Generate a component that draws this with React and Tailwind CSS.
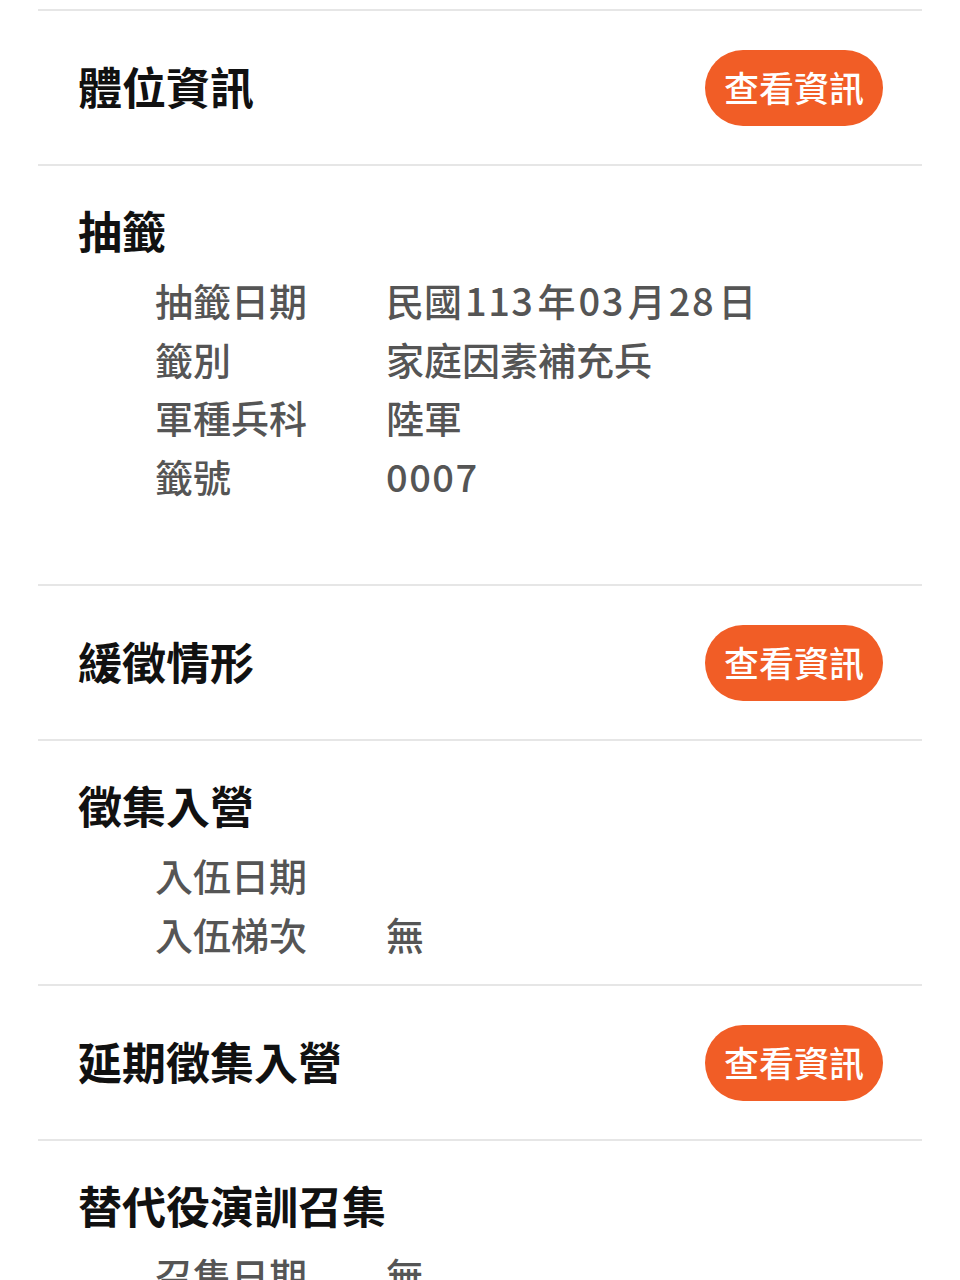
import React from "react";

const font = { fontFamily: '"Noto Sans CJK TC", "Noto Sans", sans-serif' };

function Value({ text }) {
  const parts = text.split(/(\d+)/).filter((p) => p !== "");
  return (
    <>
      {parts.map((p, i) =>
        /^\d+$/.test(p) ? (
          <span key={i} className={`tracking-[1.5px] ${i === 0 ? "" : "pl-[3px]"} ${i === parts.length - 1 ? "" : "pr-[3px]"}`}>
            {p}
          </span>
        ) : (
          <span key={i}>{p}</span>
        )
      )}
    </>
  );
}

function HeaderSection({ title }) {
  return (
    <div className="h-[155px] border-t-2 border-[#e6e6e6] flex items-center justify-between pl-[40px] pr-[39px]">
      <div className="text-[44px] leading-[60px] font-bold text-[#111111] mb-[4px]">{title}</div>
      <button className="w-[178px] h-[76px] rounded-full bg-[#f15d26] text-white text-[35px] leading-none font-medium flex items-center justify-center pb-[2px]">
        查看資訊
      </button>
    </div>
  );
}

function DataSection({ title, rows, height }) {
  return (
    <div className={`border-t-2 border-[#e6e6e6] pl-[40px] pt-[34px] ${height}`}>
      <div className="text-[44px] leading-[60px] font-bold text-[#111111]">{title}</div>
      <div className="mt-[10px] pl-[77px]">
        {rows.map(([k, v], i) => (
          <div key={i} className="flex h-[58.7px] items-center text-[38px] font-medium text-[#555555]">
            <div className="w-[231px] shrink-0">{k}</div>
            <div>
              <Value text={v} />
            </div>
          </div>
        ))}
      </div>
    </div>
  );
}

export default function App() {
  return (
    <div className="w-[960px] h-[1280px] overflow-hidden bg-white" style={font}>
      <div className="mx-[38px] pt-[9px]">
        <HeaderSection title="體位資訊" />
        <DataSection
          title="抽籤"
          height="h-[420px]"
          rows={[
            ["抽籤日期", "民國113年03月28日"],
            ["籤別", "家庭因素補充兵"],
            ["軍種兵科", "陸軍"],
            ["籤號", "0007"],
          ]}
        />
        <HeaderSection title="緩徵情形" />
        <DataSection
          title="徵集入營"
          height="h-[245px]"
          rows={[
            ["入伍日期", ""],
            ["入伍梯次", "無"],
          ]}
        />
        <HeaderSection title="延期徵集入營" />
        <DataSection
          title="替代役演訓召集"
          height="h-[300px]"
          rows={[["召集日期", "無"]]}
        />
      </div>
    </div>
  );
}
